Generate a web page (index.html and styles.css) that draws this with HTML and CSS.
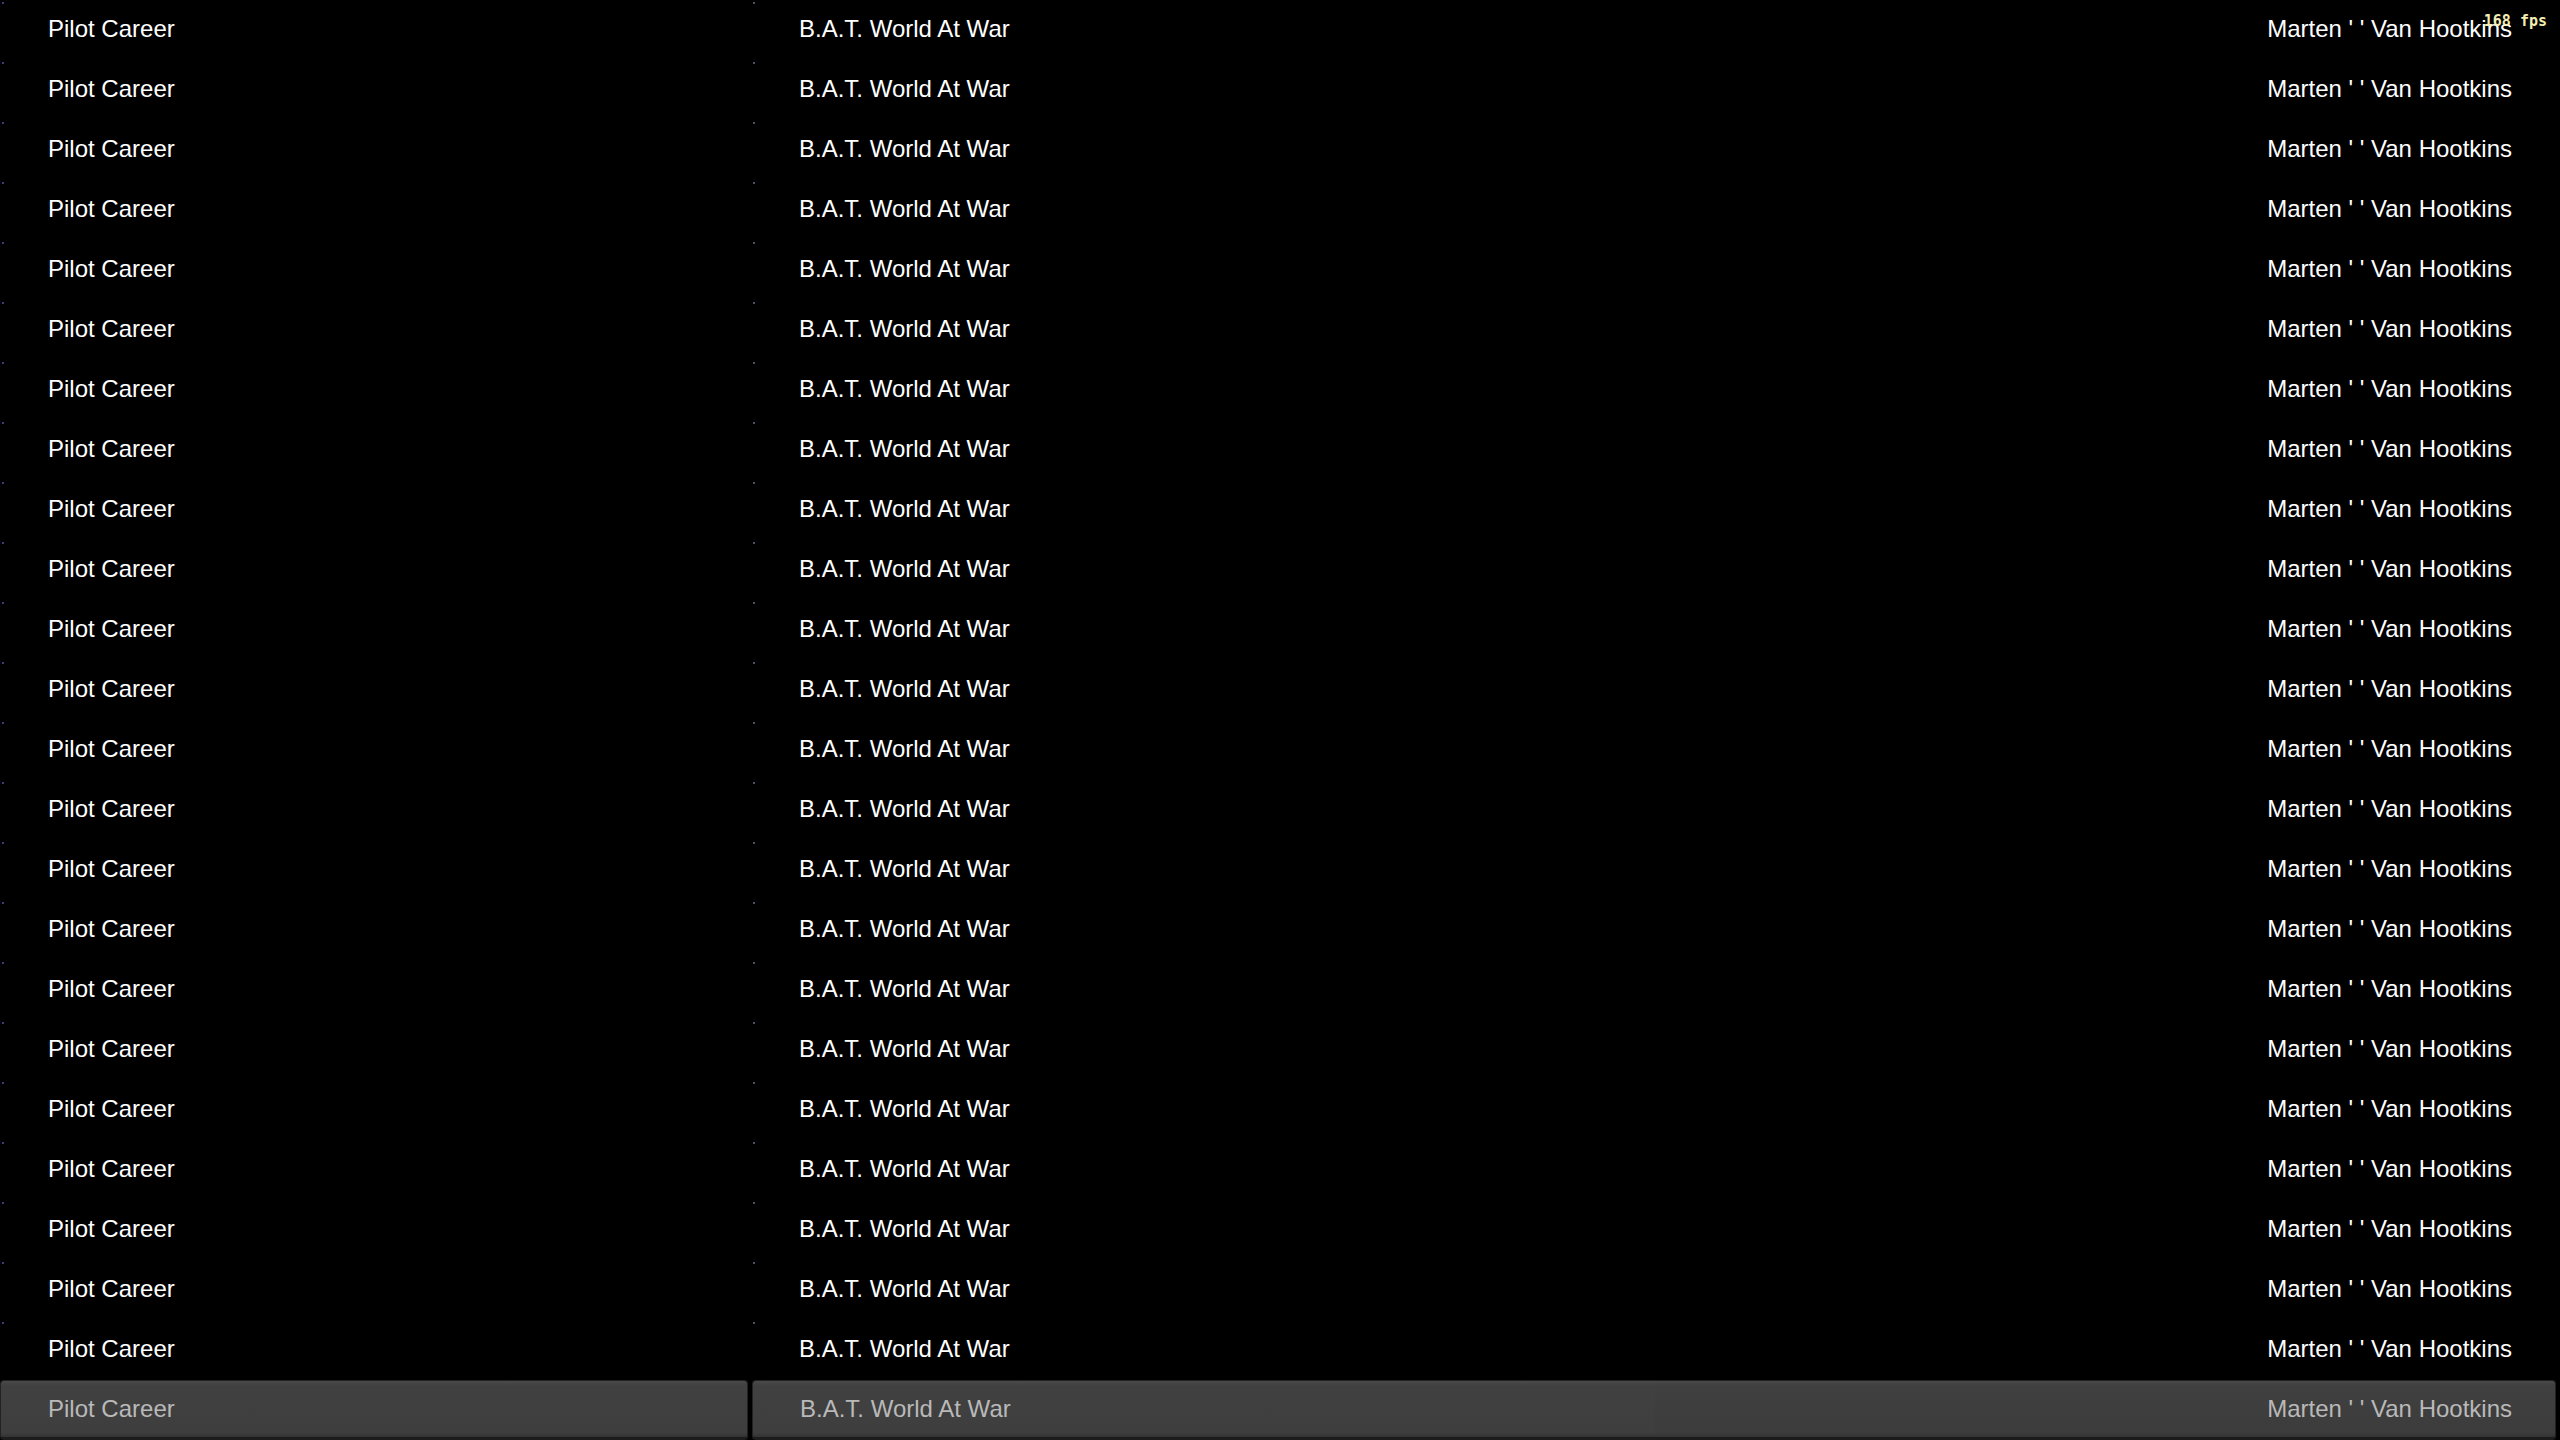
FILE: index.html
```html
<!DOCTYPE html>
<html lang="en">
<head>
    <meta charset="UTF-8">
    <title>Pilot Career</title>
    <link rel="stylesheet" href="styles.css">
</head>
<body>
    <div class="list" id="list"></div>
    <div class="fps">168 fps</div>

    <script>
        const list = document.getElementById('list');
        const rows = 24;

        for (let i = 0; i < rows; i++) {
            const row = document.createElement('div');
            row.className = 'row' + (i === rows - 1 ? ' selected' : '');
            row.innerHTML =
                '<div class="cell career">Pilot Career</div>' +
                '<div class="cell world">B.A.T. World At War</div>' +
                '<div class="cell pilot">Marten \' \' Van Hootkins</div>';
            list.appendChild(row);
        }
    </script>
</body>
</html>
```

FILE: styles.css
```css
* {
    margin: 0;
    padding: 0;
    box-sizing: border-box;
}

body {
    background: #000;
    font-family: "Liberation Sans", Arial, sans-serif;
    overflow: hidden;
}

.list {
    display: flex;
    flex-direction: column;
}

.row {
    display: grid;
    grid-template-columns: 750px 905px 1fr;
    height: 60px;
}

.cell {
    position: relative;
    height: 60px;
    line-height: 57px;
    font-size: 24px;
    color: #fff;
    white-space: nowrap;
}

/* tiny marker left in the corner of each column */
.career::before,
.world::before {
    content: "";
    position: absolute;
    top: 2px;
    left: 2px;
    width: 2px;
    height: 2px;
    background: #3c3a78;
}

.career {
    padding-left: 48px;
}

.world {
    padding-left: 49px;
}

.world::before {
    left: 3px;
    background: #5a4a6a;
}

.pilot {
    text-align: right;
    padding-right: 48px;
}

.row.selected .cell {
    color: #b9b9b9;
    background: linear-gradient(#4a4a4a, #414141 8%, #3e3e3e 92%, #333);
    border-top: 1px solid #222;
    border-bottom: 3px solid #1c1c1c;
    line-height: 55px;
}

.row.selected .cell::before {
    display: none;
}

.row.selected .career {
    margin-right: 2px;
    padding-left: 47px;
    border-left: 1px solid #222;
    border-right: 1px solid #222;
    border-radius: 4px;
}

.row.selected .world {
    margin-left: 2px;
    padding-left: 47px;
    border-left: 1px solid #222;
    border-radius: 4px 0 0 4px;
}

.row.selected .pilot {
    margin-right: 4px;
    padding-right: 43px;
    border-right: 1px solid #222;
    border-radius: 0 4px 4px 0;
    background: linear-gradient(#4a4a4a, #404040 8%, #3c3c3c 92%, #333);
}

.fps {
    position: absolute;
    top: 12px;
    right: 13px;
    font-family: "DejaVu Sans Mono", monospace;
    font-weight: bold;
    font-size: 15px;
    color: #f4eeb4;
}
```
